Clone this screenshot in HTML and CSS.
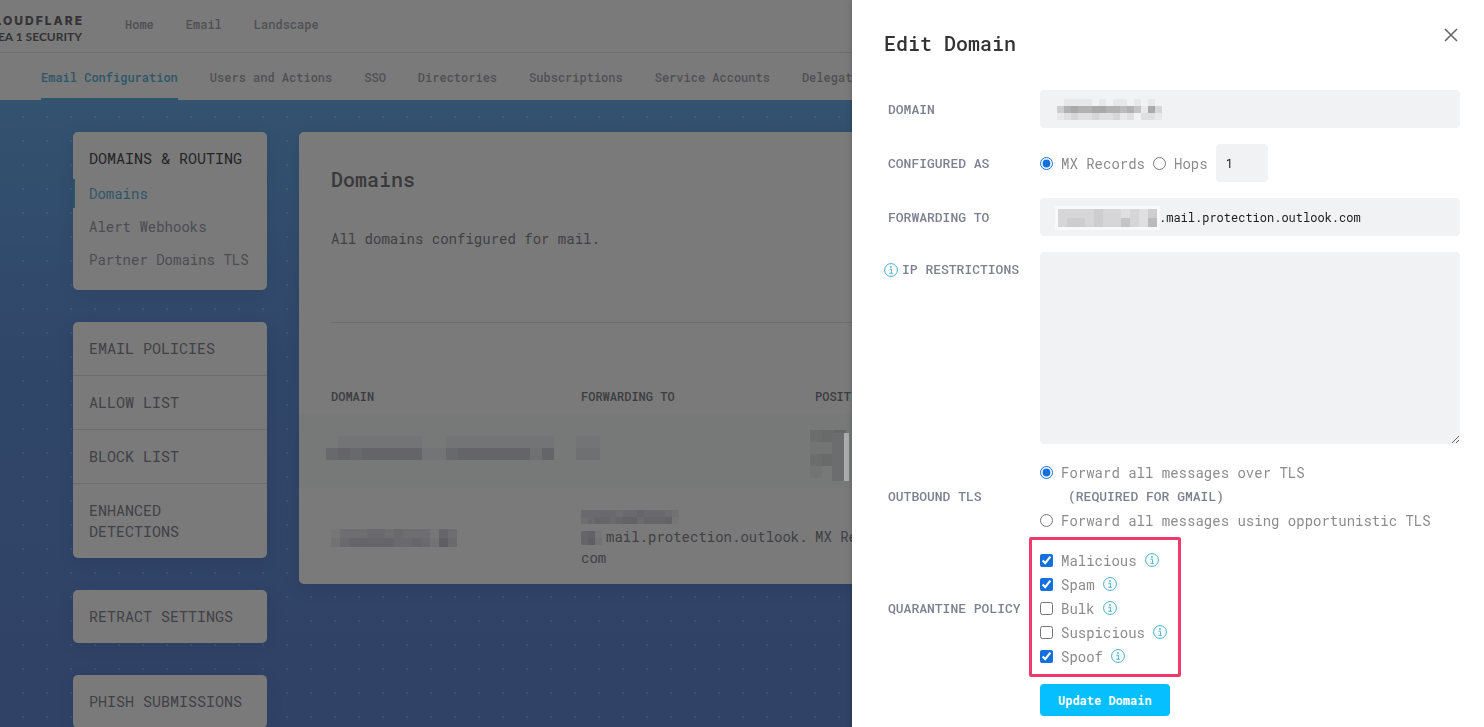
FILE: index.html
```html
<!DOCTYPE html>
<html lang="en">

<head>
    <meta charset="utf-8">
    <title>Edit Domain</title>
    <link rel="stylesheet" href="styles.css">
</head>

<body>
    <svg width="0" height="0" class="icon-defs">
        <symbol id="icon-info" viewBox="0 0 14 14">
            <circle cx="7" cy="7" r="6.4" fill="none" stroke="currentColor" stroke-width="1" />
            <circle cx="7" cy="3.9" r="0.9" fill="currentColor" />
            <path d="M5.6 6.2H7.4V10.2M5.4 10.3H8.8" fill="none" stroke="currentColor" stroke-width="1" />
        </symbol>
    </svg>

    <div class="page">
        <header class="topbar">
            <a href="#" class="logo">
                <span class="logo-name">CLOUDFLARE</span>
                <span class="logo-product">AREA 1 SECURITY</span>
            </a>
            <nav class="main-nav">
                <a href="#">Home</a>
                <a href="#">Email</a>
                <a href="#">Landscape</a>
            </nav>
        </header>
        <nav class="sub-nav">
            <a href="#" class="active">Email Configuration</a>
            <a href="#">Users and Actions</a>
            <a href="#">SSO</a>
            <a href="#">Directories</a>
            <a href="#">Subscriptions</a>
            <a href="#">Service Accounts</a>
            <a href="#">Delegated Accounts</a>
        </nav>

        <div class="content">
            <aside class="sidebar">
                <div class="card menu-open">
                    <h2>DOMAINS &amp; ROUTING</h2>
                    <a href="#" class="active">Domains</a>
                    <a href="#">Alert Webhooks</a>
                    <a href="#">Partner Domains TLS</a>
                </div>
                <div class="card menu">
                    <a href="#">EMAIL POLICIES</a>
                    <a href="#">ALLOW LIST</a>
                    <a href="#">BLOCK LIST</a>
                    <a href="#">ENHANCED DETECTIONS</a>
                </div>
                <div class="card menu">
                    <a href="#">RETRACT SETTINGS</a>
                </div>
                <div class="card menu">
                    <a href="#">PHISH SUBMISSIONS</a>
                </div>
            </aside>

            <main class="card domains">
                <h1>Domains</h1>
                <p>All domains configured for mail.</p>
                <hr>
                <table>
                    <thead>
                        <tr>
                            <th class="col-domain">DOMAIN</th>
                            <th class="col-forward">FORWARDING TO</th>
                            <th>POSITION</th>
                        </tr>
                    </thead>
                    <tbody>
                        <tr class="striped">
                            <td><span class="redacted" data-size="12" data-rows="01111111001111111110|45455555114555555250|00000000000000000000"></span></td>
                            <td><span class="redacted" data-size="12" data-rows="110|220|000"></span></td>
                            <td class="position-cell">
                                <span class="redacted green" data-size="12" data-rows="345|112|345|100"></span>
                                <span class="block"></span>
                            </td>
                        </tr>
                        <tr>
                            <td><span class="redacted" data-size="9" data-rows="13334434333153|24555554454274"></span></td>
                            <td><span class="redacted" data-size="7" data-rows="44444344544432|34554566455561"></span><br><span
                                    class="redacted prefix" data-size="7" data-rows="561|572"></span>mail.protection.outlook.<br>com</td>
                            <td>MX Records</td>
                        </tr>
                    </tbody>
                </table>
            </main>
        </div>
    </div>

    <div class="overlay"></div>

    <section class="drawer">
        <button type="button" class="close" aria-label="Close">
            <svg width="14" height="14" viewBox="0 0 14 14">
                <path d="M1 1L13 13M13 1L1 13" stroke="#666" stroke-width="1.6" fill="none" />
            </svg>
        </button>
        <h2>Edit Domain</h2>

        <form id="domainForm">
            <label class="label" for="domain">DOMAIN</label>
            <div class="field">
                <input type="text" id="domain">
                <span class="redacted on-input" data-size="7" data-rows="011110101101010|478778877675183|123223223120221"></span>
            </div>

            <span class="label">CONFIGURED AS</span>
            <div class="field options">
                <input type="radio" name="configured" id="mx" checked>
                <label for="mx">MX Records</label>
                <input type="radio" name="configured" id="hops">
                <label for="hops">Hops</label>
                <input type="text" class="hops" value="1" aria-label="Hop count">
            </div>

            <label class="label" for="forwarding">FORWARDING TO</label>
            <div class="field">
                <input type="text" id="forwarding" value=".mail.protection.outlook.com">
                <span class="redacted on-input boxed" data-size="9" data-rows="33334332324|34434335326"></span>
            </div>

            <label class="label label-top" for="ip"><svg class="info">
                    <use href="#icon-info" />
                </svg>IP RESTRICTIONS</label>
            <textarea id="ip"></textarea>

            <span class="label">OUTBOUND TLS</span>
            <div class="field">
                <div class="options">
                    <input type="radio" name="tls" id="tlsAll" checked>
                    <label for="tlsAll">Forward all messages over TLS</label>
                </div>
                <div class="note">(REQUIRED FOR GMAIL)</div>
                <div class="options">
                    <input type="radio" name="tls" id="tlsOpp">
                    <label for="tlsOpp">Forward all messages using opportunistic TLS</label>
                </div>
            </div>

            <span class="label">QUARANTINE POLICY</span>
            <div class="highlight">
                <div class="options">
                    <input type="checkbox" id="malicious" checked>
                    <label for="malicious">Malicious</label>
                    <svg class="info"><use href="#icon-info" /></svg>
                </div>
                <div class="options">
                    <input type="checkbox" id="spam" checked>
                    <label for="spam">Spam</label>
                    <svg class="info"><use href="#icon-info" /></svg>
                </div>
                <div class="options">
                    <input type="checkbox" id="bulk">
                    <label for="bulk">Bulk</label>
                    <svg class="info"><use href="#icon-info" /></svg>
                </div>
                <div class="options">
                    <input type="checkbox" id="suspicious">
                    <label for="suspicious">Suspicious</label>
                    <svg class="info"><use href="#icon-info" /></svg>
                </div>
                <div class="options">
                    <input type="checkbox" id="spoof" checked>
                    <label for="spoof">Spoof</label>
                    <svg class="info"><use href="#icon-info" /></svg>
                </div>
            </div>

            <button type="submit" class="submit">Update Domain</button>
        </form>
    </section>

    <script src="script.js"></script>
</body>

</html>
```
FILE: styles.css
```css
* {
    box-sizing: border-box;
}

body {
    margin: 0;
    font-family: "Roboto Mono", "DejaVu Sans Mono", "Liberation Mono", monospace;
    font-size: 14px;
    line-height: 21px;
    overflow: hidden;
}

a {
    color: inherit;
    text-decoration: none;
}

h1,
h2,
p {
    margin: 0;
}

.icon-defs {
    position: absolute;
}

.page {
    height: 100vh;
    overflow: hidden;
    background-color: #fff;
}

/* top navigation */
.topbar {
    display: flex;
    align-items: center;
    height: 53px;
    border-bottom: 1px solid #e4e4e8;
}

.logo {
    display: flex;
    flex-direction: column;
    align-items: flex-end;
    width: 84px;
    padding-top: 6px;
    font-family: Lato, sans-serif;
    line-height: 16px;
    white-space: nowrap;
    color: #6c6c70;
}

.logo-name {
    font-family: Inter, sans-serif;
    font-size: 12px;
    font-weight: 800;
    letter-spacing: 2px;
}

.logo-product {
    padding-right: 2px;
    font-size: 12px;
    font-weight: bold;
}

.main-nav,
.sub-nav {
    display: flex;
    gap: 32px;
    font-size: 12px;
    font-weight: 500;
    color: #a8a8b0;
    white-space: nowrap;
}

.main-nav {
    padding: 0 0 4px 41px;
}

.sub-nav {
    height: 47px;
    padding-left: 41px;
}

.sub-nav a {
    line-height: 47px;
    padding-top: 1px;
}

.sub-nav .active {
    color: #60b4dc;
    border-bottom: 2px solid #60b4dc;
}

/* page body */
.content {
    display: flex;
    align-items: flex-start;
    gap: 32px;
    min-height: 100%;
    padding: 32px 73px;
    background-image: radial-gradient(circle at 11px 11px, rgba(255, 255, 255, 0.25) 1px, transparent 1px), linear-gradient(#6cadea, #6594dc 40%, #648bd4);
    background-size: 24px 24px, 100% 627px;
    background-position: 12px 6px, 0 0;
}

.card {
    background-color: #fff;
    border-radius: 5px;
    box-shadow: 0 4px 16px rgba(40, 60, 120, 0.15);
}

.sidebar {
    display: flex;
    flex-direction: column;
    gap: 32px;
    width: 194px;
    flex-shrink: 0;
}

.menu-open {
    padding: 16px 0;
}

.menu-open h2 {
    margin-bottom: 10px;
    padding-left: 16px;
    font-size: 15px;
    font-weight: normal;
    color: #4c4c50;
}

.menu-open a {
    display: block;
    padding-left: 16px;
    line-height: 29px;
    color: #a0a0aa;
}

.menu-open a + a {
    margin-top: 4px;
}

.menu-open .active {
    padding-left: 14px;
    border-left: 2px solid #60b4dc;
    color: #60b4dc;
}

.menu a {
    display: block;
    padding: 16px;
    font-size: 15px;
    color: #888892;
}

.menu a + a {
    border-top: 1px solid #e4e4e8;
}

.domains {
    flex: 1;
    padding: 31px 0 0;
    color: #888890;
}

.domains h1 {
    padding: 0 32px;
    font-size: 20px;
    font-weight: 500;
    line-height: 32px;
    color: #78787c;
}

.domains p {
    padding: 33px 32px 0;
}

.domains hr {
    height: 1px;
    margin: 73px 32px 58px;
    border: none;
    background-color: #e4e4e8;
}

.domains table {
    width: 100%;
    table-layout: fixed;
    border-collapse: collapse;
}

.domains th {
    height: 33px;
    padding: 0 0 2px;
    font-size: 12px;
    font-weight: 500;
    text-align: left;
    color: #808088;
}

.domains th:first-child,
.domains td:first-child {
    padding-left: 32px;
}

.col-domain {
    width: 282px;
}

.col-forward {
    width: 234px;
}

.domains td {
    height: 96px;
    padding: 0;
    white-space: nowrap;
}

.domains .striped td {
    height: 74px;
    background-color: #f9fbfb;
}

/* blurred out private data, drawn by script.js */
.redacted {
    display: inline-block;
    vertical-align: middle;
    line-height: 0;
    color: #8888a0;
}

.redacted.green {
    color: #809890;
}

.prefix {
    margin-right: 4px;
}

.striped .redacted {
    margin-top: 6px;
    margin-left: -5px;
}

.position-cell {
    position: relative;
}

.position-cell .block {
    position: absolute;
    top: 19px;
    left: 17px;
    z-index: 2;
    width: 17px;
    height: 48px;
    background-color: #6c6d6e;
    border-right: 5px solid #abadad;
}

.overlay {
    position: fixed;
    inset: 0;
    z-index: 1;
    background-color: rgba(0, 0, 0, 0.52);
}

/* edit panel */
.drawer {
    position: fixed;
    top: 0;
    right: 0;
    bottom: 0;
    z-index: 3;
    width: 632px;
    max-width: 100%;
    padding: 27px 24px 0 32px;
    background-color: #fff;
    box-shadow: 0 0 6px rgba(0, 0, 0, 0.2);
}

.drawer h2 {
    margin-bottom: 31px;
    font-size: 20px;
    font-weight: 500;
    line-height: 32px;
    color: #333;
}

.close {
    position: absolute;
    top: 23px;
    right: 21px;
    display: flex;
    align-items: center;
    justify-content: center;
    width: 24px;
    height: 24px;
    padding: 0;
    border: none;
    background: none;
    cursor: pointer;
}

.drawer form {
    display: grid;
    grid-template-columns: 156px 1fr;
    row-gap: 16px;
    align-items: center;
}

.label,
.note {
    font-size: 13px;
    font-weight: 500;
    color: #7c8090;
    white-space: nowrap;
}

.label {
    padding-left: 4px;
}

.label-top {
    display: flex;
    align-items: center;
    align-self: start;
    gap: 4px;
    padding: 7px 0 0;
}

.note {
    padding-left: 28px;
    line-height: 24px;
}

.field {
    position: relative;
}

.drawer input[type="text"],
.drawer textarea {
    display: block;
    width: 100%;
    border: none;
    border-radius: 4px;
    background-color: #f1f2f4;
    font-family: inherit;
    font-size: 12px;
    color: #222;
}

.drawer input[type="text"] {
    height: 38px;
    padding: 0 10px;
}

.drawer textarea {
    height: 192px;
    padding: 10px;
}

.drawer #forwarding {
    padding-left: 119px;
}

.drawer input.hops {
    width: 52px;
}

.options {
    display: flex;
    align-items: center;
    gap: 8px;
    color: #8c8c8c;
    white-space: nowrap;
}

.options label {
    padding-top: 2px;
    line-height: 22px;
}

.options input[type="radio"],
.options input[type="checkbox"] {
    width: 13px;
    height: 13px;
    margin: 0;
    flex-shrink: 0;
    accent-color: #1370dc;
}

.info {
    width: 14px;
    height: 14px;
    flex-shrink: 0;
    color: #45aed0;
}

.on-input {
    position: absolute;
    top: 9px;
    left: 17px;
    color: #707070;
}

.on-input.boxed {
    top: 8px;
    left: 15px;
    border: 3px solid #f9f9fb;
}

.highlight {
    justify-self: start;
    margin: -11px -11px -9px;
    padding: 8px 11px 6px 8px;
    border: 3px solid #ee3a6c;
    border-radius: 2px;
}

.submit {
    grid-column: 2;
    justify-self: start;
    height: 32px;
    padding: 0 18px;
    border: none;
    border-radius: 4px;
    background-color: #05bfff;
    font-family: inherit;
    font-size: 12px;
    font-weight: bold;
    color: #fff;
    cursor: pointer;
}
```
FILE: script.js
```js
// each digit in data-rows is the darkness of one square
document.querySelectorAll(".redacted").forEach(function (element) {
    var size = Number(element.dataset.size);
    var rows = element.dataset.rows.split("|");
    var width = rows[0].length * size;
    var height = rows.length * size;
    var rects = "";
    rows.forEach(function (row, y) {
        row.split("").forEach(function (shade, x) {
            rects += '<rect x="' + x * size + '" y="' + y * size + '" width="' + size + '" height="' + size +
                '" fill="currentColor" fill-opacity="' + Number(shade) * 0.07 + '"/>';
        });
    });
    element.innerHTML = '<svg width="' + width + '" height="' + height + '" shape-rendering="crispEdges">' + rects + "</svg>";
});

document.getElementById("domainForm").addEventListener("submit", function (event) {
    event.preventDefault();
});
```
